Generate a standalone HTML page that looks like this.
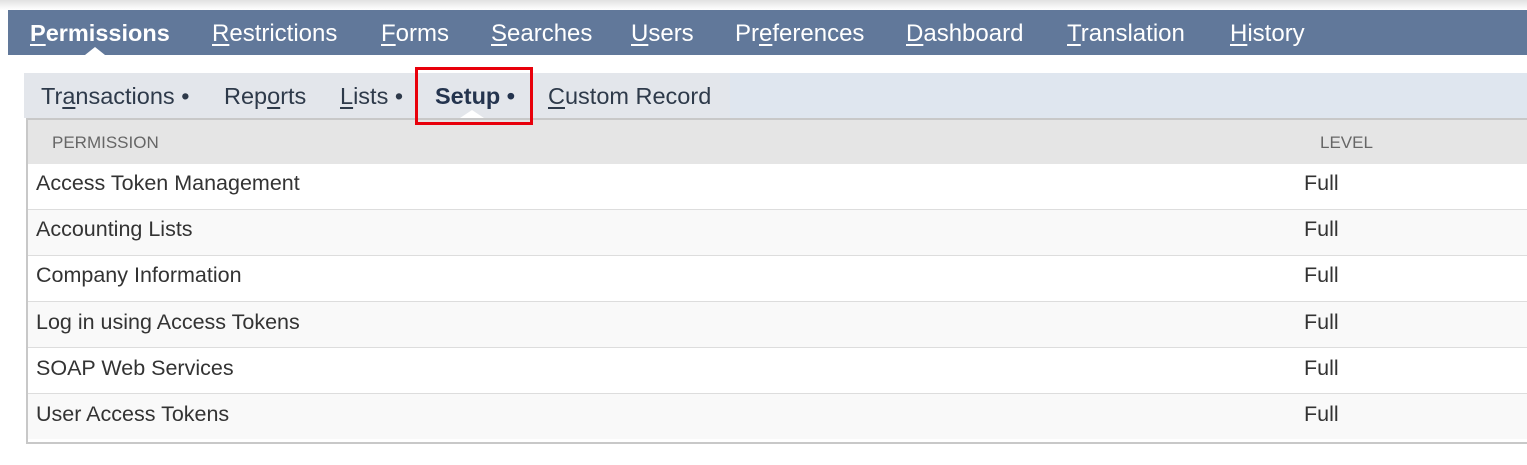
<!DOCTYPE html>
<html><head><style>
body{margin:0;width:1527px;height:465px;background:#fff;font-family:"Liberation Sans",sans-serif;position:relative;overflow:hidden}
.a{position:absolute;white-space:nowrap}
.top{left:0;top:0;width:1527px;height:10px;background:linear-gradient(#e2e2e2,#fff)}
.bar{left:8px;top:10px;width:1519px;height:45px;background:#61789a}
.t{top:20px;font-size:24px;color:#fff}
.sub{left:24px;top:73px;width:1503px;height:45px;background:#dfe6ef}
.subl{left:24px;top:73px;width:706px;height:45px;background:#e3e6eb}
.s{top:83px;font-size:23.5px;color:#2e3a4a}
.box{left:26px;top:118px;width:1501px;height:322px;border:2px solid #c8c8c8;border-right:none}
.hd{left:28px;top:120px;width:1499px;height:44px;background:#e5e5e5}
.h{top:133px;font-size:17px;color:#666}
.r{left:28px;width:1499px;height:45px;border-bottom:1px solid #ddd}
.c{font-size:21.5px;color:#333}
u{text-decoration:underline;text-underline-offset:3px}
</style></head><body>
<div class="a top"></div>
<div class="a bar"></div>
<div class="a t" style="left:30px;font-weight:bold;font-size:23.5px"><u>P</u>ermissions</div>
<div class="a" style="left:85px;top:47px;width:0;height:0;border-left:10px solid transparent;border-right:10px solid transparent;border-bottom:8px solid #fff"></div>
<div class="a t" style="left:212px"><u>R</u>estrictions</div>
<div class="a t" style="left:381px"><u>F</u>orms</div>
<div class="a t" style="left:491px"><u>S</u>earches</div>
<div class="a t" style="left:631px"><u>U</u>sers</div>
<div class="a t" style="left:735px">Pr<u>e</u>ferences</div>
<div class="a t" style="left:906px"><u>D</u>ashboard</div>
<div class="a t" style="left:1067px"><u>T</u>ranslation</div>
<div class="a t" style="left:1230px"><u>H</u>istory</div>
<div class="a sub"></div><div class="a subl"></div>
<div class="a s" style="left:41px">Tr<u>a</u>nsactions •</div>
<div class="a s" style="left:224px">Rep<u>o</u>rts</div>
<div class="a s" style="left:340px"><u>L</u>ists •</div>
<div class="a s" style="left:435px;font-weight:bold;color:#24344e">Setup •</div>
<div class="a s" style="left:548px"><u>C</u>ustom Record</div>
<div class="a box"></div>
<div class="a hd"></div>
<div class="a" style="left:460px;top:110px;width:0;height:0;border-left:12px solid transparent;border-right:12px solid transparent;border-bottom:8px solid #fff"></div>
<div class="a h" style="left:52px">PERMISSION</div>
<div class="a h" style="left:1320px">LEVEL</div>
<div class="a r" style="top:164px;background:#fff"></div>
<div class="a r" style="top:210px;background:#f9f9f9"></div>
<div class="a r" style="top:256px;background:#fff"></div>
<div class="a r" style="top:302px;background:#f9f9f9"></div>
<div class="a r" style="top:348px;background:#fff"></div>
<div class="a r" style="top:394px;background:#f9f9f9;border:none"></div>
<div class="a c" style="left:36px;top:171px">Access Token Management</div><div class="a c" style="left:1304px;top:171px">Full</div>
<div class="a c" style="left:36px;top:217px">Accounting Lists</div><div class="a c" style="left:1304px;top:217px">Full</div>
<div class="a c" style="left:36px;top:263px">Company Information</div><div class="a c" style="left:1304px;top:263px">Full</div>
<div class="a c" style="left:36px;top:310px">Log in using Access Tokens</div><div class="a c" style="left:1304px;top:310px">Full</div>
<div class="a c" style="left:36px;top:356px">SOAP Web Services</div><div class="a c" style="left:1304px;top:356px">Full</div>
<div class="a c" style="left:36px;top:402px">User Access Tokens</div><div class="a c" style="left:1304px;top:402px">Full</div>
<div class="a" style="left:415px;top:67px;width:112px;height:52px;border:3px solid #e8000b"></div>
</body></html>
